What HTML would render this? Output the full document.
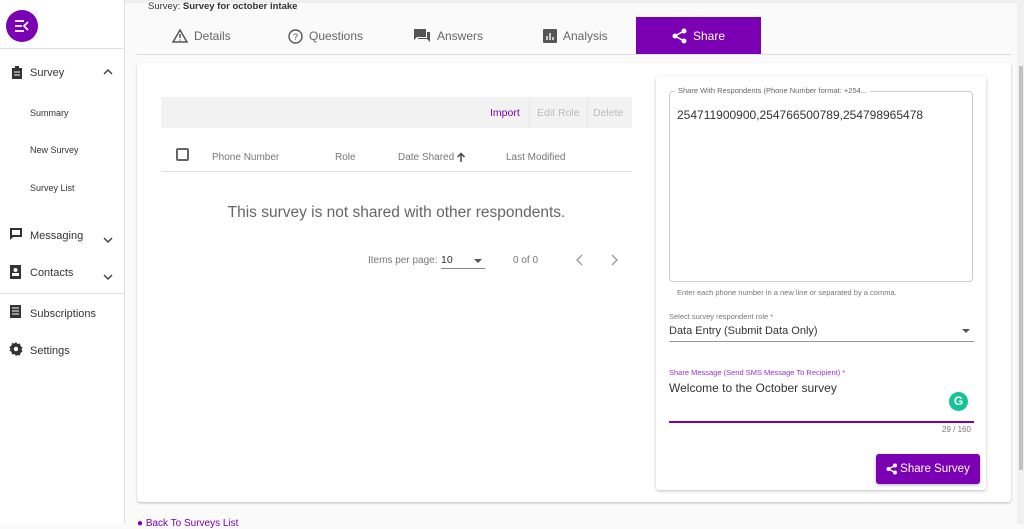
<!DOCTYPE html>
<html><head><meta charset="utf-8"><style>
*{box-sizing:border-box;margin:0;padding:0}
body{width:1024px;height:524px;overflow:hidden;background:#fafafa;font-family:"Liberation Sans",sans-serif;position:relative;color:#333}
.a{position:absolute}
.side{left:0;top:0;width:125px;height:524px;background:#fff;border-right:1px solid #e0e0e0}
.nav{font-size:11px;color:#333}
.sub{font-size:9px;color:#333}
.tab{top:17px;height:38px;font-size:12px;color:#666;display:flex;align-items:center;gap:6px}
.muted{color:#777}
</style></head><body>
<div class="a" style="left:0;top:0;width:1024px;height:3px;background:#eee"></div>
<div class="a side"></div>
<div class="a" style="left:0;top:48px;width:124px;height:1px;background:#e0e0e0"></div>
<div class="a" style="left:0;top:293px;width:124px;height:1px;background:#e0e0e0"></div>
<div class="a" style="left:6px;top:10px;width:32px;height:32px;border-radius:50%;background:#7b00b4"></div>
<svg class="a" style="left:14px;top:19px" width="16" height="14" viewBox="0 0 16 14"><path d="M1 2h9M1 7h7M1 12h9M14 3l-4 4 4 4" stroke="#fff" stroke-width="1.8" fill="none"/></svg>
<svg class="a" style="left:11px;top:66px" width="12" height="13" viewBox="0 0 12 13"><rect x="1" y="2" width="10" height="11" fill="#333"/><rect x="4" y="0" width="4" height="3" fill="#333"/><path d="M3 6h6M3 9h6" stroke="#fff"/></svg>
<div class="a nav" style="left:30px;top:67px">Survey</div>
<svg class="a" style="left:103px;top:68px" width="10" height="7"><path d="M1 6l4-4 4 4" stroke="#444" stroke-width="1.5" fill="none"/></svg>
<div class="a sub" style="left:30px;top:108px">Summary</div>
<div class="a sub" style="left:30px;top:145px">New Survey</div>
<div class="a sub" style="left:30px;top:183px">Survey List</div>
<svg class="a" style="left:10px;top:228px" width="12" height="12"><path d="M0 0h12v9H3l-3 3z" fill="#333"/><path d="M2 2h8v5H2z" fill="#fff"/></svg>
<div class="a nav" style="left:30px;top:230px">Messaging</div>
<svg class="a" style="left:103px;top:237px" width="10" height="7"><path d="M1 1l4 4 4-4" stroke="#444" stroke-width="1.5" fill="none"/></svg>
<svg class="a" style="left:10px;top:265px" width="11" height="14"><rect x="0" y="0" width="11" height="14" fill="#333"/><circle cx="5.5" cy="5" r="2" fill="#fff"/><rect x="2" y="8" width="7" height="3" fill="#fff"/></svg>
<div class="a nav" style="left:30px;top:267px">Contacts</div>
<svg class="a" style="left:103px;top:274px" width="10" height="7"><path d="M1 1l4 4 4-4" stroke="#444" stroke-width="1.5" fill="none"/></svg>
<svg class="a" style="left:10px;top:305px" width="11" height="13"><rect width="11" height="13" fill="#333"/><path d="M2 3h7M2 6h7M2 9h7" stroke="#fff"/></svg>
<div class="a nav" style="left:30px;top:308px">Subscriptions</div>
<svg class="a" style="left:9px;top:342px" width="14" height="14" viewBox="0 0 14 14"><path d="M7 0l1.5 2 2.5-.5.5 2.5 2 1.5-1 2 1 2-2 1.5-.5 2.5-2.5-.5L7 14l-1.5-2-2.5.5-.5-2.5L.5 8.5l1-1.5-1-2 2-1.5.5-2.5 2.5.5z" fill="#333"/><circle cx="7" cy="7" r="2.2" fill="#fff"/></svg>
<div class="a nav" style="left:30px;top:345px">Settings</div>

<div class="a" style="left:148px;top:1px;font-size:9.5px;color:#333">Survey: <b>Survey for october intake</b></div>
<div class="a tab" style="left:172px"><svg width="16" height="14"><path d="M8 1L15 13H1z" stroke="#555" stroke-width="1.5" fill="none"/><path d="M8 5v4M8 10.5v1" stroke="#555" stroke-width="1.5"/></svg>Details</div>
<div class="a tab" style="left:288px"><svg width="15" height="15"><circle cx="7.5" cy="7.5" r="6.5" stroke="#555" stroke-width="1.4" fill="none"/><text x="7.5" y="11" font-size="9" text-anchor="middle" fill="#555" font-family="Liberation Sans">?</text></svg>Questions</div>
<div class="a tab" style="left:414px"><svg width="17" height="14"><path d="M0 0h12v8H3l-3 3z" fill="#555"/><path d="M13 3h3v10l-3-3H4V9h9z" fill="#555"/></svg>Answers</div>
<div class="a tab" style="left:543px"><svg width="14" height="14"><rect width="14" height="14" rx="1" fill="#555"/><path d="M4 11V7M7 11V4M10 11V8" stroke="#fff" stroke-width="1.4"/></svg>Analysis</div>
<div class="a tab" style="left:636px;width:125px;background:#7b00b4;color:#fff;justify-content:center"><svg width="15" height="16"><circle cx="12" cy="3" r="2.5" fill="#fff"/><circle cx="3" cy="8" r="2.5" fill="#fff"/><circle cx="12" cy="13" r="2.5" fill="#fff"/><path d="M12 3L3 8l9 5" stroke="#fff" stroke-width="1.5" fill="none"/></svg>Share</div>
<div class="a" style="left:137px;top:54px;width:874px;height:1px;background:#ddd"></div>

<div class="a" style="left:137px;top:63px;width:874px;height:439px;background:#fff;border-radius:3px;box-shadow:0 1px 2px rgba(0,0,0,.25)"></div>
<div class="a" style="left:161px;top:97px;width:471px;height:31px;background:#f2f2f2"></div>
<div class="a" style="left:490px;top:107px;font-size:10.5px;color:#7b00b4">Import</div>
<div class="a" style="left:529px;top:97px;width:1px;height:31px;background:#e6e6e6"></div>
<div class="a" style="left:537px;top:107px;font-size:10.5px;color:#bbb">Edit Role</div>
<div class="a" style="left:587px;top:97px;width:1px;height:31px;background:#e6e6e6"></div>
<div class="a" style="left:593px;top:107px;font-size:10.5px;color:#bbb">Delete</div>
<div class="a" style="left:176px;top:148px;width:13px;height:13px;border:2px solid #666;border-radius:2px"></div>
<div class="a muted" style="left:212px;top:152px;font-size:10px">Phone Number</div>
<div class="a muted" style="left:335px;top:152px;font-size:10px">Role</div>
<div class="a muted" style="left:398px;top:152px;font-size:10px">Date Shared</div>
<svg class="a" style="left:456px;top:152px" width="10" height="11"><path d="M5 10V2M1.5 5L5 1.5 8.5 5" stroke="#444" stroke-width="1.5" fill="none"/></svg>
<div class="a muted" style="left:506px;top:152px;font-size:10px">Last Modified</div>
<div class="a" style="left:161px;top:171px;width:471px;height:1px;background:#ddd"></div>
<div class="a" style="left:161px;top:204px;width:471px;text-align:center;font-size:15.5px;color:#666">This survey is not shared with other respondents.</div>
<div class="a muted" style="left:368px;top:255px;font-size:10px">Items per page:</div>
<div class="a" style="left:441px;top:254px;font-size:10.5px;color:#333">10</div>
<div class="a" style="left:474px;top:259px;border:4px solid transparent;border-top:4px solid #555;border-bottom:0"></div>
<div class="a" style="left:441px;top:268px;width:44px;height:1px;background:#888"></div>
<div class="a muted" style="left:513px;top:255px;font-size:10px">0 of 0</div>
<svg class="a" style="left:574px;top:253px" width="50" height="14"><path d="M8 2L3 7l5 5M38 2l5 5-5 5" stroke="#999" stroke-width="1.4" fill="none"/></svg>

<div class="a" style="left:656px;top:76px;width:330px;height:414px;background:#fff;border-radius:3px;box-shadow:0 1px 3px rgba(0,0,0,.25)"></div>
<div class="a" style="left:669px;top:91px;width:304px;height:191px;border:1px solid #ccc;border-radius:4px"></div>
<div class="a" style="left:675px;top:86px;font-size:7.5px;color:#666;background:#fff;padding:0 3px">Share With Respondents (Phone Number format: +254...</div>
<div class="a" style="left:677px;top:108px;font-size:12px;color:#333">254711900900,254766500789,254798965478</div>
<div class="a" style="left:677px;top:288px;font-size:7.5px;color:#777">Enter each phone number in a new line or separated by a comma.</div>
<div class="a" style="left:669px;top:312px;font-size:7.5px;color:#777">Select survey respondent role *</div>
<div class="a" style="left:669px;top:325px;font-size:11px;color:#333">Data Entry (Submit Data Only)</div>
<div class="a" style="left:962px;top:329px;border:4px solid transparent;border-top:4px solid #555;border-bottom:0"></div>
<div class="a" style="left:669px;top:341px;width:305px;height:1px;background:#999"></div>
<div class="a" style="left:669px;top:368px;font-size:7.5px;color:#9b30c8">Share Message (Send SMS Message To Recipient) *</div>
<div class="a" style="left:669px;top:381px;font-size:12px;color:#333">Welcome to the October survey</div>
<div class="a" style="left:949px;top:392px;width:19px;height:19px;border-radius:50%;background:#15c39a;color:#fff;font-size:12px;font-weight:bold;text-align:center;line-height:19px">G</div>
<div class="a" style="left:669px;top:421px;width:305px;height:2px;background:#7b00b4"></div>
<div class="a" style="left:942px;top:425px;font-size:8px;color:#777">29 / 160</div>
<div class="a" style="left:876px;top:454px;width:104px;height:30px;background:#7b00b4;border-radius:3px;color:#fff;font-size:11.5px;display:flex;align-items:center;justify-content:center;gap:3px;box-shadow:0 1px 3px rgba(0,0,0,.3)"><svg width="11" height="12"><circle cx="9" cy="2.5" r="2" fill="#fff"/><circle cx="2.5" cy="6" r="2" fill="#fff"/><circle cx="9" cy="9.5" r="2" fill="#fff"/><path d="M9 2.5L2.5 6 9 9.5" stroke="#fff" stroke-width="1.3" fill="none"/></svg>Share Survey</div>

<div class="a" style="left:137px;top:518px;font-size:10px;color:#7b00b4">● Back To Surveys List</div>
<div class="a" style="left:1017px;top:0;width:7px;height:524px;background:#f0f0f0"></div>
<div class="a" style="left:1019px;top:66px;width:4px;height:404px;background:#c1c1c1"></div>
</body></html>
